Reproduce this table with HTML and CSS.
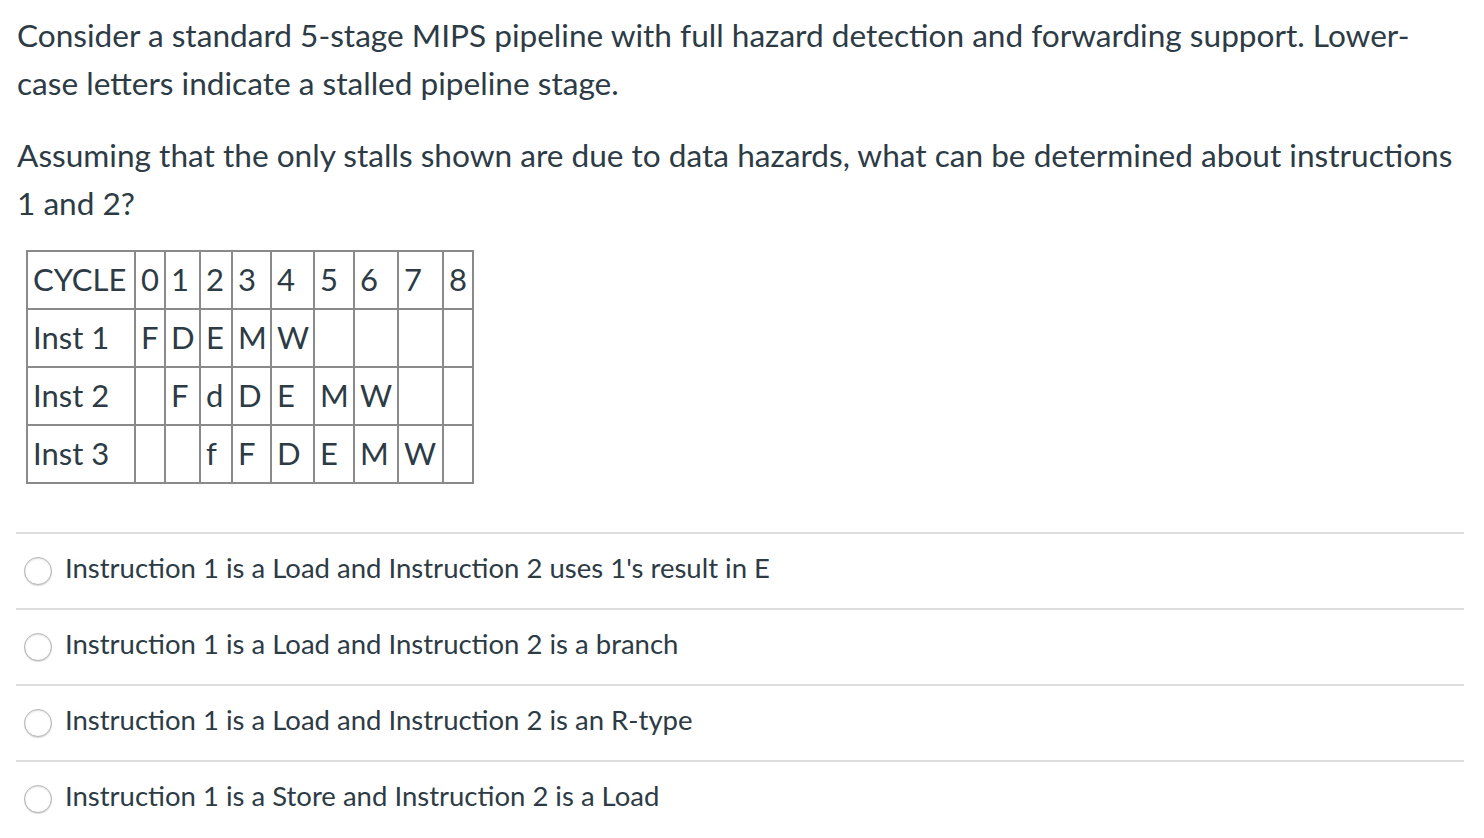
FILE: index.html
```html
<!DOCTYPE html>
<html>
<head>
<meta charset="utf-8">
<link rel="stylesheet" href="styles.css">
</head>
<body>
<div class="question">
  <p class="qtext">Consider a standard 5-stage MIPS pipeline with full hazard detection and forwarding support. Lower-case letters indicate a stalled pipeline stage.</p>
  <p class="qtext">Assuming that the only stalls shown are due to data hazards, what can be determined about instructions 1 and 2?</p>
  <table class="pipe">
    <colgroup>
      <col class="c-label"><col class="c0"><col class="c1"><col class="c2"><col class="c3"><col class="c4"><col class="c5"><col class="c6"><col class="c7"><col class="c8">
    </colgroup>
    <tr><td>CYCLE</td><td>0</td><td>1</td><td>2</td><td>3</td><td>4</td><td>5</td><td>6</td><td>7</td><td>8</td></tr>
    <tr><td>Inst 1</td><td>F</td><td>D</td><td>E</td><td>M</td><td>W</td><td></td><td></td><td></td><td></td></tr>
    <tr><td>Inst 2</td><td></td><td>F</td><td>d</td><td>D</td><td>E</td><td>M</td><td>W</td><td></td><td></td></tr>
    <tr><td>Inst 3</td><td></td><td></td><td>f</td><td>F</td><td>D</td><td>E</td><td>M</td><td>W</td><td></td></tr>
  </table>
  <div class="answers">
    <label class="answer"><span class="radio"></span><span class="atext">Instruction 1 is a Load and Instruction 2 uses 1's result in E</span></label>
    <label class="answer"><span class="radio"></span><span class="atext">Instruction 1 is a Load and Instruction 2 is a branch</span></label>
    <label class="answer"><span class="radio"></span><span class="atext">Instruction 1 is a Load and Instruction 2 is an R-type</span></label>
    <label class="answer"><span class="radio"></span><span class="atext">Instruction 1 is a Store and Instruction 2 is a Load</span></label>
  </div>
</div>
</body>
</html>
```
FILE: styles.css
```css
html, body {
  margin: 0;
  padding: 0;
  background: #ffffff;
}
body {
  font-family: Lato, "Open Sans", sans-serif;
  color: #2d3b45;
}
.question {
  padding: 11px 20px 0 16px;
}
.qtext {
  margin: 0 0 24px 1px;
  font-size: 31.6px;
  line-height: 48px;
}
.pipe {
  margin-left: 10px;
  margin-top: -1px;
  border-collapse: collapse;
  table-layout: fixed;
  width: 448px;
  border: 2px solid #333333;
  font-size: 31px;
  line-height: 36px;
}
.pipe td {
  border: 2px solid #8a8a8a;
  height: 58px;
  padding: 0 0 2px 5px;
  box-sizing: border-box;
  white-space: nowrap;
  overflow: hidden;
  vertical-align: middle;
}
.c-label { width: 108px; }
.c0 { width: 30px; }
.c1 { width: 35px; }
.c2 { width: 32px; }
.c3 { width: 39px; }
.c4 { width: 43px; }
.c5 { width: 40px; }
.c6 { width: 44px; }
.c7 { width: 45px; }
.c8 { width: 30px; }
.answers {
  margin-top: 48px;
}
.answer {
  display: flex;
  align-items: center;
  border-top: 2px solid #dcdcdc;
  height: 74px;
  font-size: 27.5px;
}
.radio {
  width: 26px;
  height: 26px;
  border-radius: 50%;
  border: 1px solid #b5b5b5;
  box-shadow: inset 0 1px 2px rgba(0,0,0,0.12), 0 1px 1px rgba(0,0,0,0.15);
  margin: 0 13px 0 8px;
  flex: none;
  background: #fff;
}
.atext {
  line-height: 34px;
  margin-bottom: 6px;
}
```
